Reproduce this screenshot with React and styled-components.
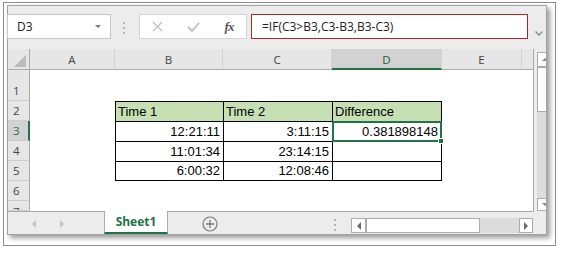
import React from "react";
import styled, { createGlobalStyle, css } from "styled-components";

const GREEN = "#217346";
const UI_FONT = `"Open Sans", "Noto Sans", sans-serif`;
const CELL_FONT = `"Liberation Sans", Arial, sans-serif`;

const GlobalStyle = createGlobalStyle`
  html, body {
    margin: 0;
    padding: 0;
    background: #ffffff;
  }
  body {
    width: 565px;
    height: 256px;
    overflow: hidden;
  }
  * {
    box-sizing: border-box;
  }
`;

const Frame = styled.div`
  width: 553px;
  height: 244px;
  margin: 2px 0 0 3px;
  padding: 2px 0 0 3px;
  border: 1px solid #8c8c8c;
  background: #ffffff;
`;

const Window = styled.div`
  width: 540px;
  height: 230px;
  border: 1px solid #a3a3a3;
  background: #ececec;
  box-shadow: 3px 3px 5px rgba(0, 0, 0, 0.4);
  display: flex;
  flex-direction: column;
`;

/* ---------- formula bar ---------- */

const FormulaBar = styled.div`
  height: 43px;
  padding-top: 8px;
  display: flex;
  align-items: flex-start;
  font-family: ${UI_FONT};
  font-size: 12px;
  color: #222;
`;

const NameBox = styled.div`
  width: 104px;
  height: 25px;
  margin-left: -1px;
  border: 1px solid #c6c6c6;
  background: #fff;
  display: flex;
  align-items: center;
  justify-content: space-between;
  padding: 0 9px 0 9px;
`;

const VDots = styled.div`
  display: flex;
  flex-direction: column;
  gap: 3px;
  margin: ${(p) => p.$margin};
  & > span {
    width: 2px;
    height: 2px;
    background: #b4b4b4;
  }
`;

const ButtonsBox = styled.div`
  width: 108px;
  height: 25px;
  border: 1px solid #d4d4d4;
  background: #fff;
  display: flex;
`;

const ToolButton = styled.div`
  width: ${(p) => p.$w}px;
  display: flex;
  align-items: center;
  justify-content: center;
`;

const Fx = styled.span`
  font-family: "Liberation Serif", "DejaVu Serif", serif;
  font-style: italic;
  font-weight: bold;
  font-size: 13px;
  color: #555;
  letter-spacing: -1px;
`;

const FormulaInput = styled.div`
  width: 277px;
  height: 25px;
  margin-left: 4px;
  border: 1px solid #a8282c;
  background: #fff;
  display: flex;
  align-items: center;
  padding-left: 10px;
`;

const Chevron = styled.div`
  margin: 9px 0 0 7px;
`;

/* ---------- sheet ---------- */

const Main = styled.div`
  height: 163px;
  display: flex;
`;

const Sheet = styled.div`
  width: 526px;
  height: 163px;
  border-right: 1px solid #ababab;
  border-bottom: 1px solid #ababab;
  background: #fff;
  display: grid;
  grid-template-columns: 22px 85px 108px 109px 110px 80px 11px;
  grid-template-rows: 21px 31px repeat(5, 20px) 10px;
  overflow: hidden;
`;

const Corner = styled.div`
  background: #e6e6e6;
  border-right: 1px solid #ababab;
  border-bottom: 1px solid #ababab;
  display: flex;
  align-items: flex-end;
  justify-content: flex-end;
  padding: 0 3px 2px 0;
`;

const ColHead = styled.div`
  background: ${(p) => (p.$active ? "#d2d2d2" : "#e6e6e6")};
  border-right: ${(p) => (p.$last ? "none" : "1px solid #d3d3d3")};
  border-bottom: ${(p) => (p.$active ? `2px solid ${GREEN}` : "1px solid #ababab")};
  font-family: ${UI_FONT};
  font-size: 11.5px;
  color: ${(p) => (p.$active ? "#1d5c39" : "#444")};
  display: flex;
  align-items: center;
  justify-content: center;
  padding-top: 1px;
`;

const RowHead = styled.div`
  overflow: hidden;
  background: ${(p) => (p.$active ? "#d2d2d2" : "#e6e6e6")};
  border-right: ${(p) => (p.$active ? `2px solid ${GREEN}` : "1px solid #ababab")};
  border-bottom: 1px solid #cdcdcd;
  font-family: ${UI_FONT};
  font-size: 11.5px;
  line-height: 15px;
  color: ${(p) => (p.$active ? GREEN : "#444")};
  display: flex;
  align-items: ${(p) => (p.$cut ? "flex-start" : "flex-end")};
  padding: ${(p) => (p.$cut ? "3px 0 0 5px" : "0 0 2px 5px")};
`;

const Cell = styled.div`
  position: relative;
  background: #fff;
  font-family: ${CELL_FONT};
  font-size: 13px;
  line-height: 15px;
  color: #000;
  display: flex;
  align-items: flex-end;
  justify-content: ${(p) => (p.$right ? "flex-end" : "flex-start")};
  padding: 0 3px 2px 2px;
  white-space: nowrap;
  ${(p) =>
    p.$table &&
    css`
      border-left: 1px solid #000;
      border-top: 1px solid #000;
    `}
  ${(p) => p.$lastCol && "border-right: 1px solid #000;"}
  ${(p) => p.$lastRow && "border-bottom: 1px solid #000;"}
  ${(p) => p.$head && "background: #c6e0b4;"}
`;

const Selection = styled.div`
  position: absolute;
  inset: -1px -1px -1px -1px;
  border: 2px solid ${GREEN};
  pointer-events: none;
  z-index: 2;
`;

const Handle = styled.div`
  position: absolute;
  right: -4px;
  bottom: -4px;
  width: 6px;
  height: 6px;
  background: ${GREEN};
  border: 1px solid #fff;
`;

/* ---------- scrollbars ---------- */

const VScroll = styled.div`
  width: 9px;
  height: 159px;
  margin: 3px 0 0 3px;
  overflow: hidden;
`;

const VScrollInner = styled.div`
  width: 15px;
  height: 100%;
  background: #dcdcdc;
  display: flex;
  flex-direction: column;
`;

const ScrollBtn = styled.div`
  flex: none;
  width: ${(p) => p.$w || "auto"};
  height: ${(p) => p.$h || "auto"};
  background: #fff;
  border: 1px solid #ababab;
  display: flex;
  align-items: center;
  justify-content: center;
`;

const ScrollTrack = styled.div`
  flex: 1;
  background: #dcdcdc;
`;

/* ---------- tab bar ---------- */

const TabBar = styled.div`
  height: 22px;
  display: flex;
  align-items: stretch;
`;

const TabNav = styled.div`
  width: 96px;
  display: flex;
  align-items: center;
  gap: 24px;
  padding: 1px 0 0 24px;
`;

const SheetTab = styled.div`
  position: relative;
  z-index: 1;
  width: 64px;
  margin-top: -1px;
  background: #fff;
  border-left: 1px solid #ababab;
  border-right: 1px solid #ababab;
  border-bottom: 2px solid ${GREEN};
  font-family: ${UI_FONT};
  font-size: 12px;
  font-weight: 700;
  color: ${GREEN};
  display: flex;
  align-items: center;
  justify-content: center;
`;

const AddSheet = styled.div`
  margin-left: 34px;
  display: flex;
  align-items: center;
  padding-top: 1px;
`;

const Spacer = styled.div`
  flex: 1;
`;

const HScroll = styled.div`
  width: 182px;
  height: 15px;
  margin: 6px 13px 0 0;
  display: flex;
  background: #dcdcdc;
`;

const Tri = ({ dir, color, size = 4 }) => {
  const s = size;
  const pts = {
    left: `${s},0 ${s},${s * 2} 0,${s}`,
    right: `0,0 0,${s * 2} ${s},${s}`,
    up: `0,${s} ${s * 2},${s} ${s},0`,
    down: `0,0 ${s * 2},0 ${s},${s}`,
  }[dir];
  const horiz = dir === "left" || dir === "right";
  return (
    <svg width={horiz ? s : s * 2} height={horiz ? s * 2 : s}>
      <polygon points={pts} fill={color} />
    </svg>
  );
};

const columns = ["A", "B", "C", "D", "E", ""];

const rows = [
  { n: 1 },
  { n: 2, head: true, B: "Time 1", C: "Time 2", D: "Difference" },
  { n: 3, B: "12:21:11", C: "3:11:15", D: "0.381898148", active: true },
  { n: 4, B: "11:01:34", C: "23:14:15", D: "" },
  { n: 5, B: "6:00:32", C: "12:08:46", D: "" },
  { n: 6 },
  { n: 7, cut: true },
];

const tableCols = ["B", "C", "D"];

export default function App() {
  return (
    <>
      <GlobalStyle />
      <Frame>
        <Window>
          <FormulaBar>
            <NameBox>
              <span>D3</span>
              <Tri dir="down" color="#777" size={3} />
            </NameBox>
            <VDots $margin="8px 14px 0 12px">
              <span />
              <span />
              <span />
            </VDots>
            <ButtonsBox>
              <ToolButton $w={34}>
                <svg width="11" height="11">
                  <path d="M1 1 L10 10 M10 1 L1 10" stroke="#bdbdbd" strokeWidth="1.3" />
                </svg>
              </ToolButton>
              <ToolButton $w={38}>
                <svg width="13" height="10">
                  <path d="M1 5 L5 9 L12 1" stroke="#bdbdbd" strokeWidth="1.8" fill="none" />
                </svg>
              </ToolButton>
              <ToolButton $w={34}>
                <Fx>fx</Fx>
              </ToolButton>
            </ButtonsBox>
            <FormulaInput>=IF(C3&gt;B3,C3-B3,B3-C3)</FormulaInput>
            <Chevron>
              <svg width="8" height="5">
                <polyline points="0.5,0.5 4,4 7.5,0.5" stroke="#8a8a8a" strokeWidth="1.3" fill="none" />
              </svg>
            </Chevron>
          </FormulaBar>

          <Main>
            <Sheet>
              <Corner>
                <svg width="12" height="12">
                  <polygon points="12,0 12,12 0,12" fill="#bababa" />
                </svg>
              </Corner>
              {columns.map((c, i) => (
                <ColHead key={i} $active={c === "D"} $last={c === ""}>
                  {c}
                </ColHead>
              ))}
              {rows.map((r) => (
                <React.Fragment key={r.n}>
                  <RowHead $active={r.active} $cut={r.cut}>
                    {r.n}
                  </RowHead>
                  <Cell />
                  {tableCols.map((c, ci) => {
                    const inTable = r.n >= 2 && r.n <= 5;
                    if (!inTable) return <Cell key={c} />;
                    return (
                      <Cell
                        key={c}
                        $table
                        $head={r.head}
                        $right={!r.head}
                        $lastCol={ci === tableCols.length - 1}
                        $lastRow={r.n === 5}
                      >
                        {r[c]}
                        {r.active && c === "D" && (
                          <Selection>
                            <Handle />
                          </Selection>
                        )}
                      </Cell>
                    );
                  })}
                  <Cell />
                  <Cell />
                </React.Fragment>
              ))}
            </Sheet>
            <VScroll>
              <VScrollInner>
                <ScrollBtn $h="15px">
                  <Tri dir="up" color="#8a8a8a" size={3} />
                </ScrollBtn>
                <ScrollBtn $h="45px" />
                <ScrollTrack />
                <ScrollBtn $h="13px">
                  <Tri dir="down" color="#8a8a8a" size={3} />
                </ScrollBtn>
              </VScrollInner>
            </VScroll>
          </Main>

          <TabBar>
            <TabNav>
              <Tri dir="left" color="#c4c4c4" size={4} />
              <Tri dir="right" color="#c4c4c4" size={4} />
            </TabNav>
            <SheetTab>Sheet1</SheetTab>
            <AddSheet>
              <svg width="16" height="16">
                <circle cx="8" cy="8" r="7" stroke="#7a7a7a" strokeWidth="1.2" fill="none" />
                <path d="M8 4 V12 M4 8 H12" stroke="#7a7a7a" strokeWidth="1.3" />
              </svg>
            </AddSheet>
            <Spacer />
            <VDots $margin="7px 15px 0 0">
              <span />
              <span />
              <span />
            </VDots>
            <HScroll>
              <ScrollBtn $w="15px">
                <Tri dir="left" color="#6a6a6a" size={4} />
              </ScrollBtn>
              <ScrollBtn $w="114px" />
              <ScrollTrack />
              <ScrollBtn $w="14px">
                <Tri dir="right" color="#6a6a6a" size={4} />
              </ScrollBtn>
            </HScroll>
          </TabBar>
        </Window>
      </Frame>
    </>
  );
}
